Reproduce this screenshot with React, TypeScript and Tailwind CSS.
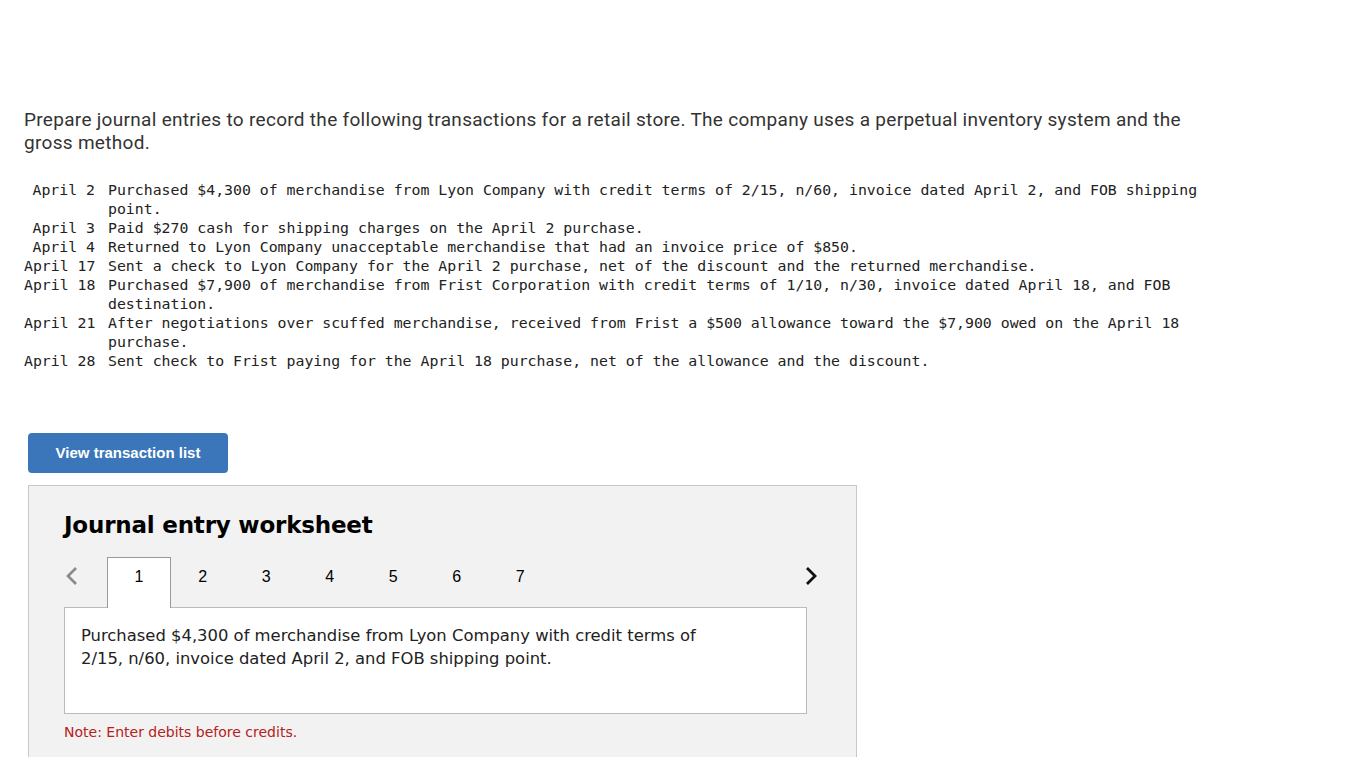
import React from "react";

const rows: [string, string[]][] = [
  ["April 2", ["Purchased $4,300 of merchandise from Lyon Company with credit terms of 2/15, n/60, invoice dated April 2, and FOB shipping", "point."]],
  ["April 3", ["Paid $270 cash for shipping charges on the April 2 purchase."]],
  ["April 4", ["Returned to Lyon Company unacceptable merchandise that had an invoice price of $850."]],
  ["April 17", ["Sent a check to Lyon Company for the April 2 purchase, net of the discount and the returned merchandise."]],
  ["April 18", ["Purchased $7,900 of merchandise from Frist Corporation with credit terms of 1/10, n/30, invoice dated April 18, and FOB", "destination."]],
  ["April 21", ["After negotiations over scuffed merchandise, received from Frist a $500 allowance toward the $7,900 owed on the April 18", "purchase."]],
  ["April 28", ["Sent check to Frist paying for the April 18 purchase, net of the allowance and the discount."]],
];

const tabs = ["1", "2", "3", "4", "5", "6", "7"];

export default function App() {
  return (
    <div className="min-h-[757px] bg-white pl-6 pt-[108px]">
      <p className="w-[1180px] text-[19px] leading-[23px] text-[#333] font-['Roboto',sans-serif] tracking-[0.3px]">
        Prepare journal entries to record the following transactions for a retail store. The company uses a perpetual inventory system and the gross method.
      </p>

      <div className="mt-[26px] font-['DejaVu_Sans_Mono',monospace] text-[14.83px] leading-[19px] text-[#222]">
        {rows.map(([label, lines]) => (
          <div key={label} className="flex">
            <div className="w-[71px] shrink-0 text-right whitespace-pre">{label}</div>
            <div className="ml-[13px] whitespace-pre">
              {lines.map((l) => (
                <div key={l}>{l}</div>
              ))}
            </div>
          </div>
        ))}
      </div>

      <button className="mt-[63px] ml-1 flex h-10 w-[200px] items-center justify-center rounded bg-[#3a76b9] pt-px font-['Liberation_Sans',sans-serif] text-[15px] font-bold text-white">
        View transaction list
      </button>

      <div className="mt-3 ml-1 w-[829px] border border-[#c8c8c8] bg-[#f2f2f2] pl-[35px] pr-[49px] pt-[24px] pb-[16px]">
        <h2 className="font-['DejaVu_Sans',sans-serif] text-[23px] font-bold leading-[30px] text-black tracking-[-0.2px]">
          Journal entry worksheet
        </h2>

        <div className="mt-[17px] flex h-[50px] items-stretch">
          <div className="flex w-[43px] items-start pt-[9px]">
            <svg width="14" height="20" viewBox="0 0 14 20" className="ml-[1px]">
              <path d="M11 2 L3 10 L11 18" fill="none" stroke="#8a8a8a" strokeWidth="2.6" />
            </svg>
          </div>
          {tabs.map((t, i) => (
            <div
              key={t}
              className={
                i === 0
                  ? "relative z-10 -mb-px flex w-[64px] items-start justify-center border border-b-0 border-[#999] bg-white pt-[7px] font-['Liberation_Sans',sans-serif] text-[16px] leading-6 text-black"
                  : "flex w-[63.5px] items-start justify-center pt-[8px] font-['Liberation_Sans',sans-serif] text-[16px] leading-6 text-black"
              }
            >
              {t}
            </div>
          ))}
          <div className="flex-1" />
          <div className="-mr-[11px] flex items-start pt-[9px]">
            <svg width="14" height="20" viewBox="0 0 14 20">
              <path d="M3 2 L11 10 L3 18" fill="none" stroke="#111" strokeWidth="2.8" />
            </svg>
          </div>
        </div>

        <div className="h-[107px] border border-[#bbb] bg-white pl-[16px] pt-[16px] font-['DejaVu_Sans',sans-serif] text-[16.4px] leading-[23px] text-[#222]">
          <p className="w-[660px]">
            Purchased $4,300 of merchandise from Lyon Company with credit terms of 2/15, n/60, invoice dated April 2, and FOB shipping point.
          </p>
        </div>

        <p className="mt-[8px] font-['DejaVu_Sans',sans-serif] text-[14px] leading-5 text-[#b52020]">
          Note: Enter debits before credits.
        </p>
      </div>
    </div>
  );
}
